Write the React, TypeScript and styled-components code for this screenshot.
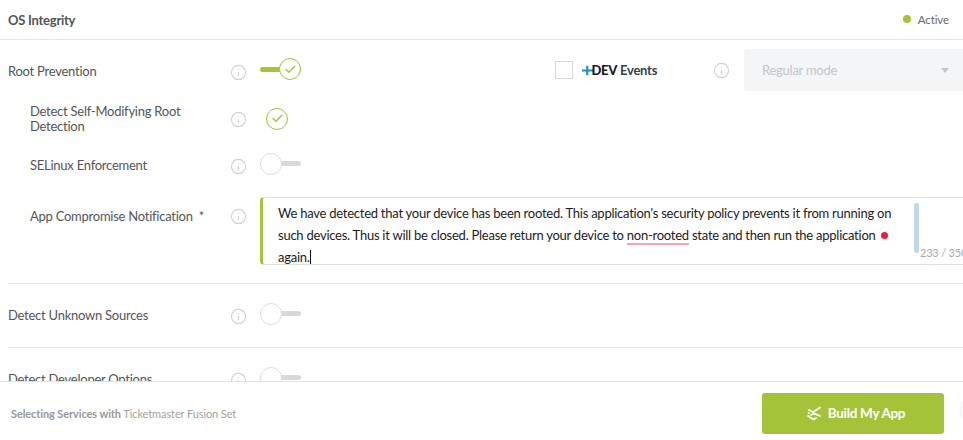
import styled, { createGlobalStyle } from 'styled-components';
import { Check, Info } from 'lucide-react';

const GlobalStyle = createGlobalStyle`
  html, body {
    margin: 0;
    padding: 0;
    background: #fff;
    font-family: Lato, 'Open Sans', sans-serif;
  }
`;

const green = '#a5c339';

const Page = styled.div`
  position: relative;
  width: 963px;
  height: 440px;
  overflow: hidden;
  display: flex;
  flex-direction: column;
  background: #fff;
  color: #555;
  font-size: 13px;
  letter-spacing: -0.25px;
`;

const Scroller = styled.div`
  height: 381px;
  flex: none;
  overflow: hidden;
`;

const Header = styled.div`
  height: 39px;
  display: flex;
  align-items: center;
  justify-content: space-between;
  padding: 0 14px 0 8px;
  border-bottom: 1px solid #e4e4e4;
`;

const Title = styled.div`
  font-weight: 700;
  color: #555;
`;

const Status = styled.div`
  display: flex;
  align-items: center;
  gap: 7px;
  font-size: 11.5px;
  letter-spacing: -0.1px;
  color: #666;
`;

const StatusDot = styled.span`
  width: 8px;
  height: 8px;
  border-radius: 50%;
  background: ${green};
  margin-bottom: 2px;
`;

const Section = styled.div<{ $pad?: number }>`
  margin-left: 8px;
  padding-bottom: ${({ $pad }) => $pad ?? 0}px;
  border-bottom: ${({ $pad }) => ($pad ? '1px solid #e6e6e6' : 'none')};
`;

const Row = styled.div<{ $top: number; $indent?: boolean; $height: number }>`
  display: flex;
  align-items: center;
  margin-top: ${({ $top }) => $top}px;
  min-height: ${({ $height }) => $height}px;
  padding-left: ${({ $indent }) => ($indent ? '22px' : '0')};
`;

const FieldRow = styled(Row)`
  align-items: flex-start;
`;

const Label = styled.div<{ $indent?: boolean }>`
  flex: none;
  box-sizing: border-box;
  width: ${({ $indent }) => ($indent ? '201px' : '223px')};
  padding-top: 1px;
  padding-right: 20px;
  line-height: 15px;
  color: #555;
`;

const RootLabel = styled(Label)`
  padding-top: 3px;
`;

const FieldLabel = styled(Label)`
  padding-top: 12px;
  padding-right: 0;
`;

const Required = styled.span`
  margin-left: 6px;
`;

const InfoMark = styled(Info).attrs({ size: 17, strokeWidth: 1.6 })`
  flex: none;
  color: #d2d2d2;
  margin: 2px 13px 0 -1px;
`;

const RootInfo = styled(InfoMark)`
  margin-top: 4px;
`;

const FieldInfo = styled(InfoMark)`
  margin-top: 11px;
`;

const Toggle = styled.div<{ $on?: boolean }>`
  position: relative;
  flex: none;
  width: 41px;
  height: 22px;
  margin-top: ${({ $on }) => ($on ? '-2px' : '-3px')};
  display: flex;
  align-items: center;

  &::before {
    content: '';
    width: 100%;
    height: 5px;
    border-radius: 3px;
    background: ${({ $on }) => ($on ? green : '#d8d8d8')};
  }
`;

const Knob = styled.span<{ $on?: boolean }>`
  position: absolute;
  top: 0;
  left: ${({ $on }) => ($on ? '19px' : '0')};
  width: 22px;
  height: 22px;
  box-sizing: border-box;
  border-radius: 50%;
  background: #fff;
  border: 1px solid ${({ $on }) => ($on ? green : '#dedede')};
  display: flex;
  align-items: center;
  justify-content: center;
  color: ${green};
`;

const SoloCheck = styled(Knob)`
  position: static;
  flex: none;
  margin-left: 6px;
`;

const EventsCheckbox = styled.span`
  flex: none;
  width: 18px;
  height: 18px;
  box-sizing: border-box;
  border: 1px solid #d9d9d9;
  margin-left: 254px;
`;

const Events = styled.div`
  display: flex;
  align-items: center;
  width: 131px;
  margin-left: 9px;
  flex: none;
  font-weight: 700;
  color: #34414d;
`;

const Logo = styled.span`
  display: inline-flex;
  align-items: center;
  width: 35px;
  margin-right: 3px;
  font-size: 13px;
  font-weight: 900;
  letter-spacing: -0.3px;
  color: #16202a;
`;

const LogoWord = styled.span`
  margin-left: -2px;
`;

const EventsInfo = styled(InfoMark)`
  margin: 0 14px 0 0;
`;

const ModeSelect = styled.div`
  flex: 1;
  height: 42px;
  display: flex;
  align-items: center;
  justify-content: space-between;
  padding: 0 14px 0 18px;
  border-radius: 4px 0 0 4px;
  background: #f4f5f7;
  color: #c3c6ca;
`;

const Caret = styled.span`
  width: 0;
  height: 0;
  border-left: 4px solid transparent;
  border-right: 4px solid transparent;
  border-top: 5px solid #c3c6ca;
`;

const Message = styled.div`
  position: relative;
  flex: 1;
  height: 68px;
  box-sizing: border-box;
  padding: 4px 0 0 15px;
  border: 1px solid #e0e0e0;
  border-left: 3px solid ${green};
  border-right: none;
  border-radius: 4px 0 0 4px;
  overflow: hidden;
  line-height: 22px;
  color: #1c1c1c;
`;

const MessageText = styled.div`
  width: 622px;
`;

const Misspelt = styled.span`
  border-bottom: 2px solid #f7a1b5;
`;

const TextCursor = styled.span`
  display: inline-block;
  width: 1px;
  height: 15px;
  vertical-align: -3px;
  background: #111;
`;

const CheckerDot = styled.span`
  position: absolute;
  top: 34px;
  left: 618px;
  width: 7px;
  height: 7px;
  border-radius: 50%;
  background: #ee1c3c;
`;

const ScrollThumb = styled.span`
  position: absolute;
  top: 5px;
  left: 651px;
  width: 5px;
  height: 50px;
  border-radius: 2px;
  background: #c2d9e9;
`;

const Counter = styled.span`
  position: absolute;
  top: 48px;
  left: 657px;
  font-size: 11px;
  line-height: 14px;
  white-space: nowrap;
  letter-spacing: -0.2px;
  color: #aaa;
`;

const Footer = styled.div`
  flex: 1;
  display: flex;
  align-items: center;
  justify-content: space-between;
  padding: 0 19px 0 11px;
  background: #fff;
  border-top: 1px solid #e2e2e2;
`;

const FooterNote = styled.div`
  font-size: 11px;
  letter-spacing: -0.1px;
  color: #a2a2a2;
  margin-top: 4px;

  b {
    font-weight: 700;
    color: #999;
  }
`;

const BuildButton = styled.button`
  width: 182px;
  height: 41px;
  margin-top: 4px;
  padding: 0 0 0 6px;
  display: flex;
  align-items: center;
  justify-content: center;
  gap: 6px;
  border: none;
  border-radius: 3px;
  background: ${green};
  color: #fff;
  font-family: inherit;
  font-size: 13.5px;
  letter-spacing: -0.3px;
  font-weight: 700;
`;

const EdgeBubble = styled.span`
  position: absolute;
  left: 961px;
  top: 394px;
  width: 32px;
  height: 32px;
  border-radius: 50%;
  background: #fff;
  box-shadow: 0 0 3px rgba(0, 0, 0, 0.14);
`;

const Switch = ({ on }: { on?: boolean }) => (
  <Toggle $on={on}>
    <Knob $on={on}>{on && <Check size={13} strokeWidth={2.6} />}</Knob>
  </Toggle>
);

const BuildIcon = () => (
  <svg width="15" height="15" viewBox="0 0 15 15" fill="none" stroke="#fff" strokeWidth="1.7" strokeLinecap="round">
    <path d="M2 4 L6 6.2 L13 1.5" />
    <path d="M4 9 L7 7.5 L13 10" />
    <path d="M1 10 L6.5 13.5 L9 12" />
    <path d="M1.5 7 L2 7.3" />
  </svg>
);

const DevLogo = () => (
  <Logo>
    <svg width="13" height="11" viewBox="0 0 13 11" fill="none" stroke="#1790c8" strokeWidth="2.4">
      <path d="M0 5.5 H13 M6 0 V11" />
    </svg>
    <LogoWord>DEV</LogoWord>
  </Logo>
);

export default function App() {
  return (
    <Page>
      <GlobalStyle />
      <Scroller>
        <Header>
          <Title>OS Integrity</Title>
          <Status>
            <StatusDot />
            Active
          </Status>
        </Header>

        <Section $pad={18}>
          <Row $top={9} $height={42}>
            <RootLabel>Root Prevention</RootLabel>
            <RootInfo />
            <Switch on />
            <EventsCheckbox />
            <Events>
              <DevLogo />
              Events
            </Events>
            <EventsInfo />
            <ModeSelect>
              Regular mode
              <Caret />
            </ModeSelect>
          </Row>

          <Row $top={12} $height={30} $indent>
            <Label $indent>Detect Self-Modifying Root Detection</Label>
            <InfoMark />
            <SoloCheck $on as="span">
              <Check size={13} strokeWidth={2.6} />
            </SoloCheck>
          </Row>

          <Row $top={16} $height={30} $indent>
            <Label $indent>SELinux Enforcement</Label>
            <InfoMark />
            <Switch />
          </Row>

          <FieldRow $top={17} $height={68} $indent>
            <FieldLabel $indent>
              App Compromise Notification<Required>*</Required>
            </FieldLabel>
            <FieldInfo />
            <Message>
              <MessageText>
                We have detected that your device has been rooted. This application's security policy prevents it from
                running on such devices. Thus it will be closed. Please return your device to{' '}
                <Misspelt>non-rooted</Misspelt> state and then run the application again.
                <TextCursor />
              </MessageText>
              <CheckerDot />
              <ScrollThumb />
              <Counter>233 / 350</Counter>
            </Message>
          </FieldRow>
        </Section>

        <Section $pad={17}>
          <Row $top={16} $height={30}>
            <Label>Detect Unknown Sources</Label>
            <InfoMark />
            <Switch />
          </Row>
        </Section>

        <Section>
          <Row $top={16} $height={30}>
            <Label>Detect Developer Options</Label>
            <InfoMark />
            <Switch />
          </Row>
        </Section>
      </Scroller>

      <Footer>
        <FooterNote>
          <b>Selecting Services with</b> Ticketmaster Fusion Set
        </FooterNote>
        <BuildButton>
          <BuildIcon />
          Build My App
        </BuildButton>
      </Footer>
      <EdgeBubble />
    </Page>
  );
}
